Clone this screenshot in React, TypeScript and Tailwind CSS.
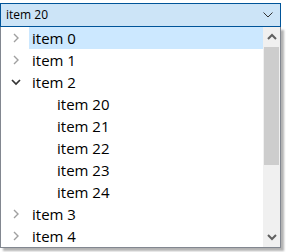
import React from "react";

const Chevron = ({ dir, color, w = 1.4 }: { dir: "right" | "down" | "up"; color: string; w?: number }) => {
  const d =
    dir === "right" ? "M3 1 L7 5 L3 9" : dir === "down" ? "M1 3 L5 7 L9 3" : "M1 7 L5 3 L9 7";
  return (
    <svg width="10" height="10" viewBox="0 0 10 10">
      <path d={d} fill="none" stroke={color} strokeWidth={w} />
    </svg>
  );
};

type Row = { label: string; level: number; arrow?: "right" | "down"; selected?: boolean };

const rows: Row[] = [
  { label: "item 0", level: 0, arrow: "right", selected: true },
  { label: "item 1", level: 0, arrow: "right" },
  { label: "item 2", level: 0, arrow: "down" },
  { label: "item 20", level: 1 },
  { label: "item 21", level: 1 },
  { label: "item 22", level: 1 },
  { label: "item 23", level: 1 },
  { label: "item 24", level: 1 },
  { label: "item 3", level: 0, arrow: "right" },
  { label: "item 4", level: 0, arrow: "right" },
];

export default function App() {
  return (
    <div className="w-[288px] h-[252px] bg-white pt-[3px] relative" style={{ fontFamily: '"Open Sans", "Noto Sans", sans-serif' }}>
      <div className="w-[281px] h-[24px] border border-[#005499] bg-[#cce4f7] flex items-center justify-between pl-[5px] pr-[7px]">
        <span className="text-[12px] text-black leading-none">item 20</span>
        <svg width="10" height="6" viewBox="0 0 10 6">
          <path d="M0.5 0.5 L5 5 L9.5 0.5" fill="none" stroke="#333" strokeWidth="1" />
        </svg>
      </div>
      <div className="w-[281px] h-[221px] border border-[#828790] border-t-0 bg-white flex shadow-[3px_3px_2px_rgba(0,0,0,0.3)]">
        <div className="flex-1 flex flex-col">
          {rows.map((r) => (
            <div key={r.label} className="h-[22px] flex items-center">
              <div className="w-[28px] flex items-center justify-center pl-[2px]">
                {r.level === 0 && r.arrow && (
                  <Chevron dir={r.arrow} color={r.arrow === "down" ? "#333" : "#a0a0a0"} w={r.arrow === "down" ? 1.7 : 1.4} />
                )}
              </div>
              <div
                className={`flex-1 h-full flex items-center text-[15px] text-black ${
                  r.selected ? "bg-[#cce8ff]" : ""
                } ${r.level === 1 ? "pl-[28px]" : "pl-[3px]"}`}
              >
                {r.label}
              </div>
            </div>
          ))}
        </div>
        <div className="w-[17px] bg-[#f0f0f0] flex flex-col">
          <div className="h-[20px] flex items-center justify-center">
            <Chevron dir="up" color="#606060" w={2} />
          </div>
          <div className="h-[118px] bg-[#cdcdcd] mx-[1px]" />
          <div className="flex-1" />
          <div className="h-[20px] flex items-center justify-center">
            <Chevron dir="down" color="#606060" w={2} />
          </div>
        </div>
      </div>
    </div>
  );
}
